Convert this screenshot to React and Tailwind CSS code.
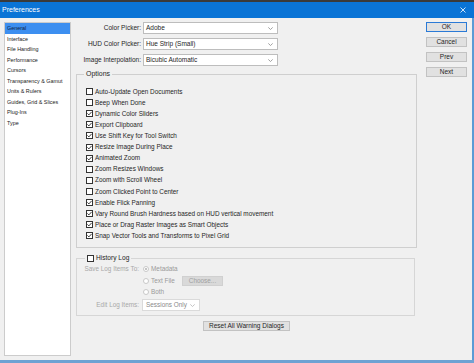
import React from "react";

const Check = ({ checked, disabled }) => (
  <span
    className={`w-[7px] h-[7px] shrink-0 border flex items-center justify-center bg-white ${
      disabled ? "border-[#b5b5b5]" : "border-[#333333]"
    }`}
  >
    {checked && (
      <svg width="5" height="5" viewBox="0 0 5 5">
        <polyline points="0.4,2.4 1.9,3.9 4.6,0.9" fill="none" stroke="#222222" strokeWidth="0.9" />
      </svg>
    )}
  </span>
);

const Radio = ({ on }) => (
  <span className="w-[6px] h-[6px] shrink-0 rounded-full border border-[#c8c8c8] bg-white flex items-center justify-center">
    {on && <span className="w-[2px] h-[2px] rounded-full bg-[#b0b0b0]" />}
  </span>
);

const Chevron = ({ color = "#8a8a8a" }) => (
  <svg width="5" height="3" viewBox="0 0 5 3" className="shrink-0">
    <polyline points="0.3,0.4 2.5,2.5 4.7,0.4" fill="none" stroke={color} strokeWidth="0.8" />
  </svg>
);

const Select = ({ value }) => (
  <div className="w-[135px] h-[12px] bg-white border border-[#bdbdbd] flex items-center justify-between pl-[2px] pr-[4px] text-[6.5px] text-[#1e1e1e] whitespace-nowrap">
    <span>{value}</span>
    <Chevron />
  </div>
);

const Btn = ({ label, primary }) => (
  <div
    className={`w-[41px] h-[10px] flex items-center justify-center text-[6.5px] text-[#1e1e1e] bg-[#e1e1e1] border ${
      primary ? "border-[#2b7ad6]" : "border-[#c2c2c2]"
    }`}
  >
    {label}
  </div>
);

const sidebar = [
  "General",
  "Interface",
  "File Handling",
  "Performance",
  "Cursors",
  "Transparency & Gamut",
  "Units & Rulers",
  "Guides, Grid & Slices",
  "Plug-Ins",
  "Type",
];

const options = [
  ["Auto-Update Open Documents", false],
  ["Beep When Done", false],
  ["Dynamic Color Sliders", true],
  ["Export Clipboard", true],
  ["Use Shift Key for Tool Switch", true],
  ["Resize Image During Place", true],
  ["Animated Zoom", true],
  ["Zoom Resizes Windows", false],
  ["Zoom with Scroll Wheel", false],
  ["Zoom Clicked Point to Center", false],
  ["Enable Flick Panning", true],
  ["Vary Round Brush Hardness based on HUD vertical movement", true],
  ["Place or Drag Raster Images as Smart Objects", true],
  ["Snap Vector Tools and Transforms to Pixel Grid", true],
];

export default function App() {
  return (
    <div
      className="w-[474px] h-[363px] bg-[#f0f0f0] flex flex-col overflow-hidden text-[#262626] whitespace-nowrap"
      style={{ fontFamily: '"Liberation Sans", Arial, sans-serif' }}
    >
      <div className="h-[2px] bg-[#3a3a3a]" />
      <div className="h-[16px] bg-[#0a74d6] flex items-center justify-between pl-[2px] pr-[8px] text-white text-[7px]">
        <span>Preferences</span>
        <svg width="6" height="6" viewBox="0 0 6 6">
          <path d="M0.5 0.5 L5.5 5.5 M5.5 0.5 L0.5 5.5" stroke="#ffffff" strokeWidth="0.8" />
        </svg>
      </div>
      <div className="flex flex-1 min-h-0">
        <div className="flex flex-1 py-[4px]">
          {/* Sidebar */}
          <div className="ml-[4px] w-[67px] bg-white border border-[#cccccc] flex flex-col">
            {sidebar.map((s, i) => (
              <div
                key={s}
                className={`h-[10.5px] flex items-center pl-[2px] text-[5.4px] ${
                  i === 0 ? "bg-[#3d8ff0] text-[#10233f]" : "text-[#222]"
                }`}
              >
                {s}
              </div>
            ))}
          </div>

          {/* Main column */}
          <div className="ml-[5px] w-[341px] flex flex-col">
            <div className="flex flex-col gap-[4px]">
              {[
                ["Color Picker:", "Adobe"],
                ["HUD Color Picker:", "Hue Strip (Small)"],
                ["Image Interpolation:", "Bicubic Automatic"],
              ].map(([l, v]) => (
                <div key={l} className="flex items-center">
                  <div className="w-[67px] text-right text-[6.5px] pr-[2px]">{l}</div>
                  <Select value={v} />
                </div>
              ))}
            </div>

            <fieldset className="mt-[4px] h-[178px] border border-[#cfcfcf] pl-[7px] pr-[4px] pb-[4px]">
              <legend className="px-[2px] text-[7px] leading-[8px]">Options</legend>
              <div className="pt-[8px] pl-[2px] flex flex-col">
                {options.map(([t, c]) => (
                  <div key={t} className="h-[11.1px] flex items-center gap-[2px] text-[6.4px]">
                    <Check checked={c} />
                    <span>{t}</span>
                  </div>
                ))}
              </div>
            </fieldset>

            <fieldset className="mt-[6px] w-[339px] h-[62px] border border-[#d6d6d6] pl-[8px]">
              <legend className="px-[2px] text-[6.6px] leading-[8px]">
                <span className="flex items-center gap-[2px]">
                  <Check checked={false} />
                  <span>History Log</span>
                </span>
              </legend>
              <div className="-ml-[8px] pt-[1.5px] flex flex-col text-[6.4px] text-[#a8a8a8]">
                <div className="h-[11.5px] flex items-center">
                  <div className="w-[62px] text-right">Save Log Items To:</div>
                  <div className="ml-[4px] flex items-center gap-[2px]">
                    <Radio on />
                    <span className="text-[#9a9a9a]">Metadata</span>
                  </div>
                </div>
                <div className="h-[11.5px] flex items-center">
                  <div className="w-[62px]" />
                  <div className="ml-[4px] w-[39px] flex items-center gap-[2px]">
                    <Radio />
                    <span className="text-[#9a9a9a]">Text File</span>
                  </div>
                  <div className="w-[41px] h-[10px] bg-[#d9d9d9] border border-[#d0d0d0] flex items-center justify-center text-[#a0a0a0]">
                    Choose...
                  </div>
                </div>
                <div className="h-[11.5px] flex items-center">
                  <div className="w-[62px]" />
                  <div className="ml-[4px] flex items-center gap-[2px]">
                    <Radio />
                    <span className="text-[#9a9a9a]">Both</span>
                  </div>
                </div>
                <div className="h-[14px] flex items-center">
                  <div className="w-[62px] text-right">Edit Log Items:</div>
                  <div className="ml-[3px] w-[58px] h-[12px] bg-white border border-[#dadada] flex items-center justify-between pl-[3px] pr-[4px] text-[#8a8a8a]">
                    <span>Sessions Only</span>
                    <Chevron color="#b5b5b5" />
                  </div>
                </div>
              </div>
            </fieldset>

            <div className="mt-[5px] flex justify-center">
              <div className="w-[87px] h-[10px] bg-[#e1e1e1] border border-[#c2c2c2] flex items-center justify-center text-[6.5px]">
                Reset All Warning Dialogs
              </div>
            </div>
          </div>

          {/* Buttons */}
          <div className="ml-[9px] flex flex-col gap-[5px]">
            <Btn label="OK" primary />
            <Btn label="Cancel" />
            <Btn label="Prev" />
            <Btn label="Next" />
          </div>
        </div>
        <div className="w-[2px] bg-[#5b9bd5]" />
      </div>
      <div className="h-[3px] bg-[#6ea2d3]" />
    </div>
  );
}
